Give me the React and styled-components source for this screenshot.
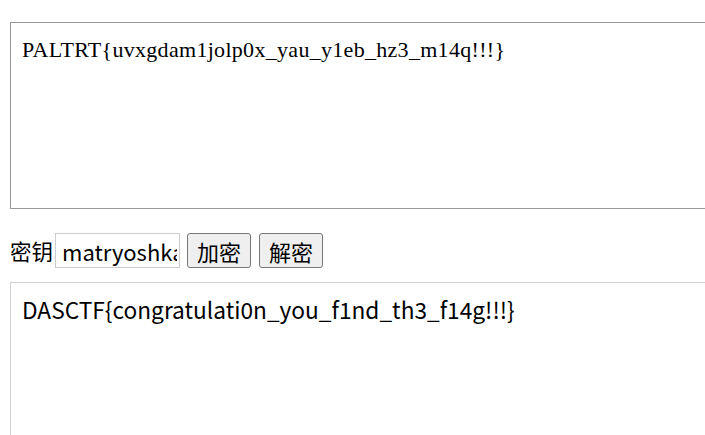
import { createGlobalStyle } from 'styled-components';
import styled from 'styled-components';

const GlobalStyle = createGlobalStyle`
  html, body {
    margin: 0;
    padding: 0;
    background: #fff;
    overflow: hidden;
  }
`;

export const Page = styled.div`
  display: flex;
  flex-direction: column;
  align-items: flex-start;
  padding: 22px 0 0 10px;
  width: 760px;
`;

export const TextBox = styled.textarea`
  box-sizing: border-box;
  display: block;
  margin: 0;
  width: 740px;
  height: ${(p) => p.$height}px;
  padding: ${(p) => (p.$mono ? '13px 11px' : '12px 11px')};
  border: 1px solid ${(p) => (p.$mono ? '#999' : '#d0d0d0')};
  border-radius: 0;
  outline: none;
  resize: none;
  background: #fff;
  color: #000;
  font-family: ${(p) =>
    p.$mono
      ? '"Liberation Serif", "Noto Sans CJK SC", serif'
      : '"Noto Sans CJK SC", "Noto Sans", sans-serif'};
  font-size: ${(p) => (p.$mono ? '22px' : '22.7px')};
  letter-spacing: ${(p) => (p.$mono ? '0.3px' : '0')};
  line-height: 1.3;
`;

export const KeyRow = styled.div`
  display: flex;
  align-items: center;
  margin: 23px 0 13px;
  height: 37px;
`;

export const Label = styled.span`
  font-family: "Noto Sans CJK SC", sans-serif;
  font-size: 21.5px;
  color: #000;
  margin-right: 2px;
`;

export const KeyInput = styled.input`
  box-sizing: border-box;
  width: 125px;
  height: 35px;
  margin: 0 7px 0 0;
  padding: 0 2px 0 6px;
  border: 1px solid #ccc;
  border-radius: 0;
  outline: none;
  font-family: "Noto Sans CJK SC", "Noto Sans", sans-serif;
  font-size: 22px;
  color: #000;
`;

export const Button = styled.button`
  box-sizing: border-box;
  height: 35px;
  margin: 0 8px 0 0;
  padding: 0 9px;
  border: 1px solid #767676;
  border-radius: 3px;
  background: #efefef;
  color: #000;
  font-family: "Noto Sans CJK SC", sans-serif;
  font-size: 22px;
  line-height: 1;
`;

const App = () => {
  return (
    <Page>
      <GlobalStyle />
      <TextBox $mono $height={187} defaultValue="PALTRT{uvxgdam1jolp0x_yau_y1eb_hz3_m14q!!!}" />
      <KeyRow>
        <Label>密钥</Label>
        <KeyInput type="text" defaultValue="matryoshka" />
        <Button>加密</Button>
        <Button>解密</Button>
      </KeyRow>
      <TextBox $height={187} defaultValue="DASCTF{congratulati0n_you_f1nd_th3_f14g!!!}" />
    </Page>
  );
};

export default App;
